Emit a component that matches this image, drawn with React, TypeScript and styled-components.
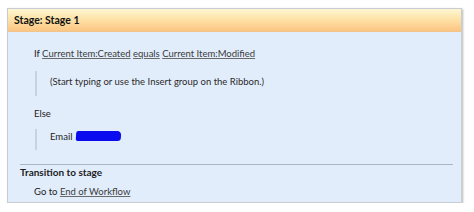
import styled, { createGlobalStyle } from 'styled-components';

const GlobalStyle = createGlobalStyle`
  html, body {
    margin: 0;
    padding: 0;
    background: #ffffff;
  }
  body {
    font-family: Lato, 'Open Sans', 'Liberation Sans', sans-serif;
    font-size: 9.5px;
    color: #1c1c1c;
  }
`;

const Page = styled.div`
  padding: 8px 0 0 7px;
`;

const Panel = styled.div`
  width: 455px;
  height: 195px;
  box-sizing: border-box;
  border: 1px solid #c9cdd2;
  background: #e2edfc;
  box-shadow: 1px 1px 2px rgba(0, 0, 0, 0.28);
  display: flex;
  flex-direction: column;
`;

const Header = styled.div`
  height: 22px;
  display: flex;
  align-items: center;
  padding-left: 6px;
  font-weight: 700;
  font-size: 10.5px;
  color: #111;
  background: linear-gradient(#fdf6d3 0%, #fde3a8 45%, #fcc583 100%);
  border-bottom: 1px solid #f1c48c;
`;

const Body = styled.div`
  padding: 15px 7px 0 12px;
  display: flex;
  flex-direction: column;
`;

const Line = styled.div<{ $indent?: number }>`
  line-height: 14px;
  height: 14px;
  white-space: nowrap;
  padding-left: ${(p) => p.$indent ?? 0}px;
`;

const Link = styled.span`
  color: #3a3a3a;
  text-decoration: underline;
  text-decoration-color: #6a6a6a;
  text-underline-offset: 1px;
`;

const Block = styled.div<{ $top: number; $padTop: number; $padBottom: number }>`
  margin: ${(p) => p.$top}px 0 0 15px;
  border-left: 2px solid #c9d2de;
  padding: ${(p) => p.$padTop}px 0 ${(p) => p.$padBottom}px 13px;
`;

const Hint = styled(Line)`
  color: #2a2a2a;
`;

const Redacted = styled.span`
  display: inline-block;
  width: 45px;
  height: 10px;
  margin-left: 4px;
  vertical-align: -1px;
  background: #0b0bf0;
  border-radius: 2px 4px 3px 2px;
  transform: skewX(-4deg);
`;

const Section = styled.div`
  margin-top: 14px;
  border-top: 1px solid #a9b5c5;
  margin-right: 1px;
`;

const Title = styled(Line)`
  font-weight: 700;
  font-size: 10px;
`;

export default function App() {
  return (
    <>
      <GlobalStyle />
      <Page>
        <Panel>
          <Header>Stage: Stage 1</Header>
          <Body>
            <Line $indent={14}>
              If <Link>Current Item:Created</Link> <Link>equals</Link>{' '}
              <Link>Current Item:Modified</Link>
            </Line>
            <Block $top={10} $padTop={4} $padBottom={7}>
              <Hint>(Start typing or use the Insert group on the Ribbon.)</Hint>
            </Block>
            <Line $indent={14} style={{ marginTop: 11 }}>
              Else
            </Line>
            <Block $top={8} $padTop={1} $padBottom={6}>
              <Line>
                Email
                <Redacted />
              </Line>
            </Block>
            <Section>
              <Title>Transition to stage</Title>
              <Line $indent={14} style={{ marginTop: 6 }}>
                Go to <Link>End of Workflow</Link>
              </Line>
            </Section>
          </Body>
        </Panel>
      </Page>
    </>
  );
}
